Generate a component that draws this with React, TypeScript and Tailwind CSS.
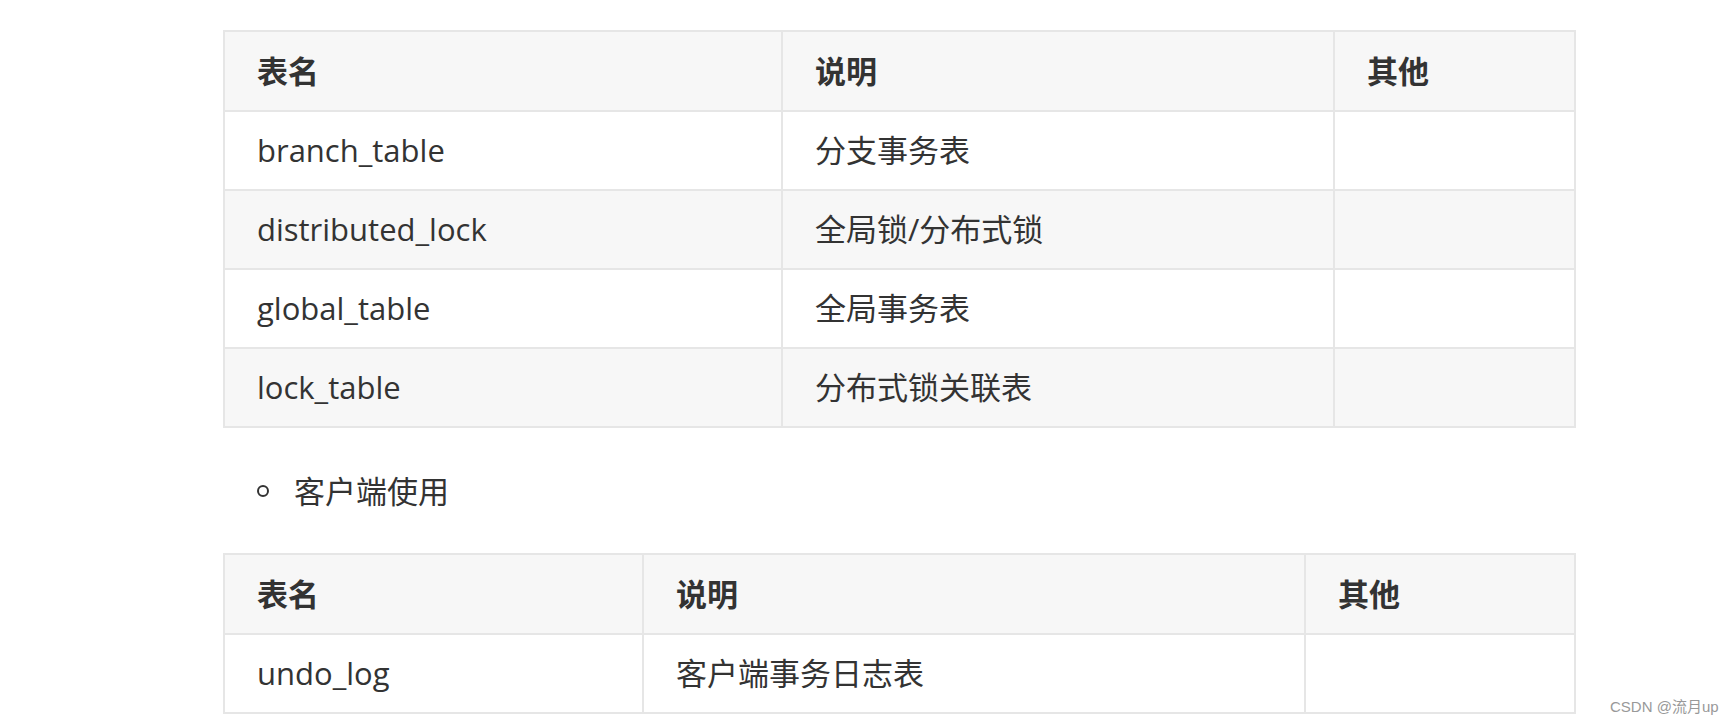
const font = { fontFamily: '"Open Sans", "Noto Sans CJK SC", sans-serif' };

type Row = { name: string; desc: string; other?: string };

const serverRows: Row[] = [
  { name: "branch_table", desc: "分支事务表" },
  { name: "distributed_lock", desc: "全局锁/分布式锁" },
  { name: "global_table", desc: "全局事务表" },
  { name: "lock_table", desc: "分布式锁关联表" },
];

const clientRows: Row[] = [{ name: "undo_log", desc: "客户端事务日志表" }];

function DocTable({ rows, widths }: { rows: Row[]; widths: [string, string, string] }) {
  const cell = "border-2 border-[#e6e6e6] pl-[32px] align-middle";
  return (
    <table className="table-fixed border-collapse w-[1351px] text-[31px] text-[#333]">
      <colgroup>
        <col className={widths[0]} />
        <col className={widths[1]} />
        <col className={widths[2]} />
      </colgroup>
      <thead>
        <tr className="bg-[#f7f7f7]">
          <th className={`${cell} h-[80px] text-left font-bold`}>表名</th>
          <th className={`${cell} h-[80px] text-left font-bold`}>说明</th>
          <th className={`${cell} h-[80px] text-left font-bold`}>其他</th>
        </tr>
      </thead>
      <tbody>
        {rows.map((r, i) => (
          <tr key={r.name} className={i % 2 === 1 ? "bg-[#f7f7f7]" : "bg-white"}>
            <td className={`${cell} h-[79px]`}>{r.name}</td>
            <td className={`${cell} h-[79px]`}>{r.desc}</td>
            <td className={`${cell} h-[79px]`}>{r.other}</td>
          </tr>
        ))}
      </tbody>
    </table>
  );
}

export default function App() {
  return (
    <div className="relative h-[724px] w-[1720px] overflow-hidden bg-white" style={font}>
      <div className="flex flex-col pl-[223px] pt-[30px]">
        <DocTable rows={serverRows} widths={["w-[558px]", "w-[552px]", "w-[241px]"]} />
        <div className="flex items-center h-[40px] mt-[43px] pl-[34px] text-[31px] text-[#333]">
          <span className="w-[12px] h-[12px] rounded-full border-2 border-[#333]" />
          <span className="ml-[25px]">客户端使用</span>
        </div>
        <div className="mt-[42px]">
          <DocTable rows={clientRows} widths={["w-[419px]", "w-[662px]", "w-[270px]"]} />
        </div>
      </div>
      <div
        className="absolute left-[1610px] top-[696px] text-[15px] text-[#999]"
        style={{ fontFamily: '"Liberation Sans", "Noto Sans CJK SC", sans-serif' }}
      >
        CSDN @流月up
      </div>
    </div>
  );
}
